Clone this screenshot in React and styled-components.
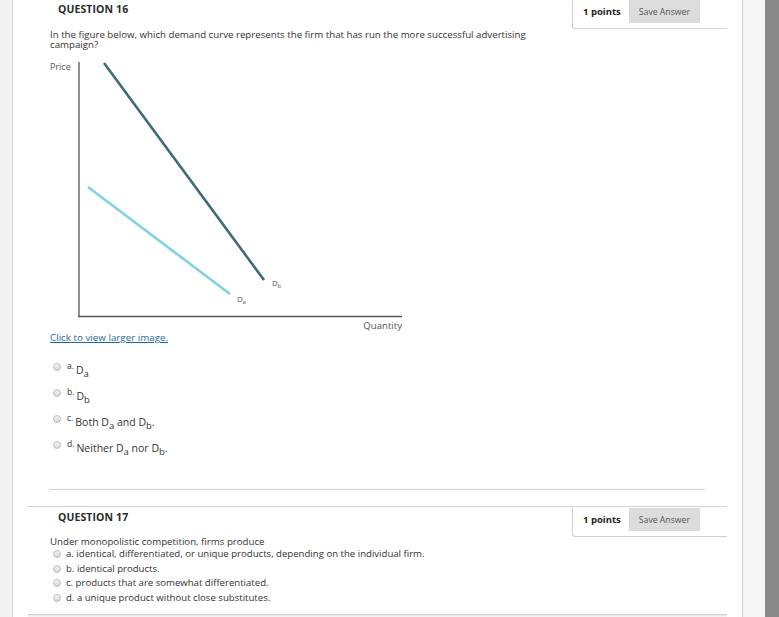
import React from "react"
import styled, { createGlobalStyle } from "styled-components"

const GlobalStyle = createGlobalStyle`
    html, body {
        margin: 0;
        padding: 0;
        background: #fff;
        overflow: hidden;
    }
    body {
        font-family: "Open Sans", "DejaVu Sans", sans-serif;
        color: #333;
    }
`

const Page = styled.div`
    display: flex;
    width: 779px;
    height: 617px;
    overflow: hidden;
`
const LeftGutter = styled.div`
    width: 12px;
    flex-shrink: 0;
    background: #f3f3f3;
    border-right: 1px solid #d4d4d4;
`
const Main = styled.div`
    flex: 1;
    background: #fff;
    overflow: hidden;
`
const RightGutter = styled.div`
    width: 22px;
    flex-shrink: 0;
    background: #f6f6f6;
    border-left: 1px solid #cfcfcf;
`
const ScrollBar = styled.div`
    width: 14px;
    flex-shrink: 0;
    background: #8a8a8a;
`

const Question = styled.div`
    margin: ${p => p.$top || "0"} 15px 0 15px;
    border-top: 1px solid #d2d2d2;
    box-shadow: ${p => (p.$shaded ? "inset 0 3px 3px -2px rgba(0,0,0,0.12)" : "none")};
    min-height: ${p => (p.$shaded ? "20px" : "0")};
`
const Header = styled.div`
    display: flex;
    justify-content: space-between;
    align-items: flex-start;
`
const Title = styled.h3`
    margin: 0;
    padding: 3px 0 0 30px;
    font-size: 10.5px;
    line-height: 14px;
    font-weight: 700;
    color: #2b2b2b;
    letter-spacing: 0.1px;
`
const PointsBox = styled.div`
    display: flex;
    align-items: center;
    gap: 8px;
    padding: 1px 27px 5px 10px;
    border-left: 1px solid #d2d2d2;
    border-bottom: 1px solid #d2d2d2;
    border-bottom-left-radius: 3px;
`
const Points = styled.span`
    font-size: 9.5px;
    font-weight: 700;
    color: #222;
`
const SaveButton = styled.button`
    height: 23px;
    padding: 0 10px;
    border: none;
    background: #dcdcdc;
    font-family: inherit;
    font-size: 8.7px;
    color: #555;
`

const Body = styled.div`
    padding: 0 22px;
`
const Prompt = styled.p`
    margin: ${p => p.$top || "2px"} 0 0 0;
    font-size: 9.7px;
    line-height: 10px;
    color: #333;
    max-width: 490px;
`
const Chart = styled.svg`
    display: block;
    margin: 8px 0 0 -2px;
`
const Link = styled.a`
    display: block;
    font-size: 9.8px;
    line-height: 12px;
    color: #1f6d9c;
    text-decoration: underline;
`

const Options = styled.div`
    display: flex;
    flex-direction: column;
    padding: ${p => (p.$compact ? "0" : "17px 0 0 0")};
`
const Row = styled.div`
    display: flex;
    align-items: flex-start;
    height: ${p => (p.$compact ? "14.5px" : "26px")};
    font-size: ${p => (p.$compact ? "9.6px" : "10.5px")};
    line-height: ${p => (p.$compact ? "14px" : "12px")};
`
const Radio = styled.span`
    width: 8px;
    height: 8px;
    flex-shrink: 0;
    box-sizing: border-box;
    border-radius: 50%;
    border: 1px solid #bdbdbd;
    background: linear-gradient(#f4f4f4, #d9d9d9);
    margin: ${p => (p.$compact ? "3px 5px 0 3px" : "2px 6px 0 3px")};
`
const Letter = styled.span`
    font-size: 8.5px;
    line-height: 10px;
    margin-right: 2px;
`
const Answer = styled.span`
    margin-top: 3px;
    sub {
        font-size: 9.5px;
        vertical-align: -3px;
        line-height: 0;
    }
`
const Separator = styled.hr`
    margin: 24px 22px 16px 22px;
    border: none;
    border-top: 1px solid #d2d2d2;
`

const ChartText = styled.text`
    font-family: "Open Sans", "DejaVu Sans", sans-serif;
    fill: #555;
`

function DemandChart() {
    return (
        <Chart width="360" height="274" viewBox="0 0 360 274">
            <ChartText x="2" y="12" fontSize="9">Price</ChartText>
            <line x1="31" y1="4" x2="31" y2="259" stroke="#555" strokeWidth="1.3" />
            <line x1="30" y1="258.5" x2="354" y2="258.5" stroke="#555" strokeWidth="1.3" />
            <line x1="56" y1="5" x2="216" y2="222" stroke="#3e6b78" strokeWidth="2.6" />
            <line x1="40" y1="129" x2="182" y2="236" stroke="#80d2de" strokeWidth="2.6" />
            <ChartText x="224" y="228" fontSize="8">
                D<tspan fontSize="5.5" dy="2">b</tspan>
            </ChartText>
            <ChartText x="189" y="244" fontSize="8">
                D<tspan fontSize="5.5" dy="2">a</tspan>
            </ChartText>
            <ChartText x="354" y="271" fontSize="9.6" textAnchor="end">Quantity</ChartText>
        </Chart>
    )
}

const q16Options = [
    { letter: "a.", body: <>D<sub>a</sub></> },
    { letter: "b.", body: <>D<sub>b</sub></> },
    { letter: "c.", body: <>Both D<sub>a</sub> and D<sub>b</sub>.</> },
    { letter: "d.", body: <>Neither D<sub>a</sub> nor D<sub>b</sub>.</> },
]

const q17Options = [
    "a. identical, differentiated, or unique products, depending on the individual firm.",
    "b. identical products.",
    "c. products that are somewhat differentiated.",
    "d. a unique product without close substitutes.",
]

function QuestionHeader({ number }) {
    return (
        <Header>
            <Title>QUESTION {number}</Title>
            <PointsBox>
                <Points>1 points</Points>
                <SaveButton>Save Answer</SaveButton>
            </PointsBox>
        </Header>
    )
}

export default function App() {
    return (
        <>
            <GlobalStyle />
            <Page>
                <LeftGutter />
                <Main>
                    <Question $top="-2px">
                        <QuestionHeader number={16} />
                        <Body>
                            <Prompt $top="1px">
                                In the figure below, which demand curve represents the firm that has run the more successful advertising campaign?
                            </Prompt>
                            <DemandChart />
                            <Link href="#">Click to view larger image.</Link>
                            <Options>
                                {q16Options.map(o => (
                                    <Row key={o.letter}>
                                        <Radio />
                                        <Letter>{o.letter}</Letter>
                                        <Answer>{o.body}</Answer>
                                    </Row>
                                ))}
                            </Options>
                        </Body>
                        <Separator />
                    </Question>
                    <Question>
                        <QuestionHeader number={17} />
                        <Body>
                            <Prompt $top="0">Under monopolistic competition, firms produce</Prompt>
                            <Options $compact>
                                {q17Options.map(t => (
                                    <Row key={t} $compact>
                                        <Radio $compact />
                                        <span>{t}</span>
                                    </Row>
                                ))}
                            </Options>
                        </Body>
                    </Question>
                    <Question $shaded $top="9px" />
                </Main>
                <RightGutter />
                <ScrollBar />
            </Page>
        </>
    )
}
